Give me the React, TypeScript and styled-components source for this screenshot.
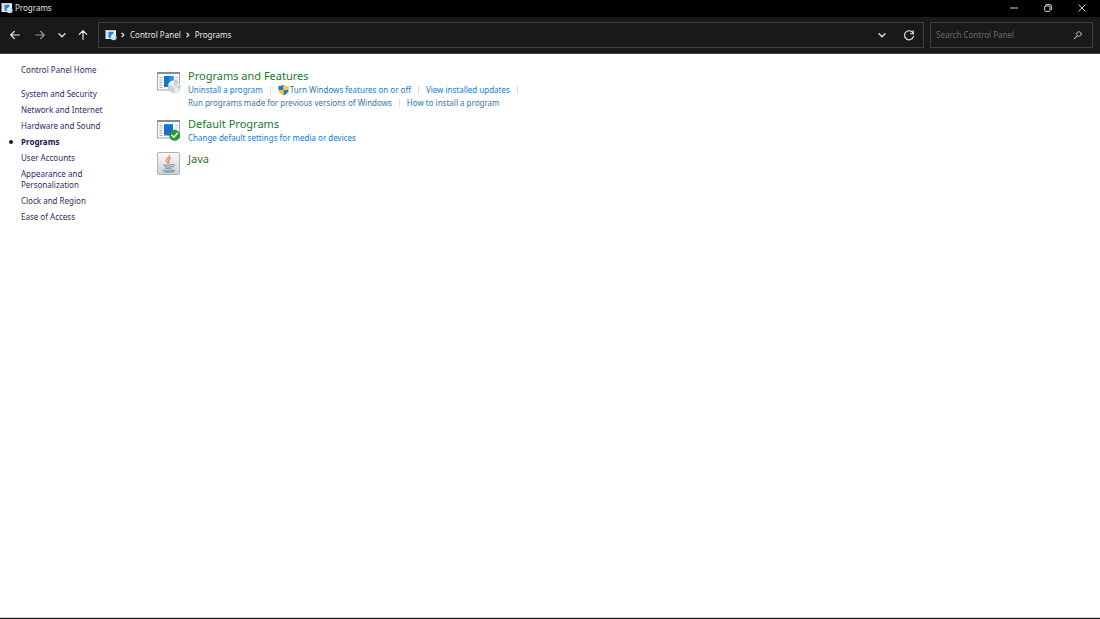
import React from "react";
import styled, { createGlobalStyle } from "styled-components";

const GlobalStyle = createGlobalStyle`
  *, *::before, *::after { box-sizing: border-box; }
  body {
    margin: 0;
    background: #fff;
    font-family: "Noto Sans", "Open Sans", sans-serif;
    font-size: 8px;
  }
  svg { display: block; flex: none; }
  a { text-decoration: none; color: inherit; }
  a:hover { text-decoration: underline; }
  button {
    border: 0;
    padding: 0;
    background: transparent;
    color: inherit;
    font: inherit;
  }
`;

const Window = styled.div`
  min-height: 100vh;
  display: flex;
  flex-direction: column;
  background: #fff;
  border-bottom: 1px solid #1c1c1c;
  box-shadow: inset 0 -1px 0 #cfcfcf;
`;

const TitleBar = styled.header`
  display: flex;
  align-items: center;
  height: 17px;
  padding: 0 0 1px 1px;
  background: #000;
  color: #e4e4e4;
`;

const WindowTitle = styled.h1`
  flex: 1;
  margin: 0;
  padding-left: 2px;
  font-size: 8px;
  font-weight: 400;
  line-height: 12px;
`;

const CaptionButton = styled.button`
  display: flex;
  align-items: center;
  justify-content: center;
  width: 34px;
  height: 16px;
  color: #d0d0d0;
`;

const CaptionButtons = styled.div`
  display: flex;
  padding-right: 1px;
`;

const Toolbar = styled.div`
  display: flex;
  align-items: center;
  height: 37px;
  padding: 0 7px 0 2px;
  background: #191919;
  border-bottom: 1px solid #3a3a3a;
  color: #e8e8e8;
`;

const ToolButton = styled.button<{ $width: number; $dim?: boolean }>`
  display: flex;
  align-items: center;
  justify-content: center;
  width: ${(p) => p.$width}px;
  height: 26px;
  color: ${(p) => (p.$dim ? "#9a9a9a" : "#e8e8e8")};
`;

const AddressBar = styled.div`
  display: flex;
  align-items: center;
  flex: 1;
  height: 26px;
  margin: 0 6px 0 3px;
  padding: 0 1px 0 6px;
  border: 1px solid #404040;
`;

const Crumbs = styled.nav`
  display: flex;
  align-items: center;
  flex: 1;
  gap: 5px;
  padding-left: 4px;
  line-height: 12px;
`;

const SearchBox = styled.label`
  display: flex;
  align-items: center;
  width: 163px;
  height: 26px;
  padding: 0 9px 0 5px;
  border: 1px solid #404040;
  color: #b0b0b0;
`;

const SearchInput = styled.input`
  flex: 1;
  min-width: 0;
  padding: 0;
  border: 0;
  outline: 0;
  background: transparent;
  color: #e8e8e8;
  font: inherit;
  line-height: 12px;
  &::placeholder { color: #6a6a6a; opacity: 1; }
`;

const Body = styled.div`
  display: flex;
  flex: 1;
  align-items: flex-start;
`;

const Sidebar = styled.nav`
  width: 157px;
  padding: 10px 50px 0 21px;
  color: #2c2c66;
  line-height: 11px;
`;

const HomeLink = styled.a`
  display: block;
`;

const NavList = styled.ul`
  display: flex;
  flex-direction: column;
  gap: 5px;
  margin: 13px 0 0;
  padding: 0;
  list-style: none;
`;

const NavItem = styled.li<{ $current?: boolean }>`
  position: relative;
  font-weight: ${(p) => (p.$current ? 700 : 400)};
  color: ${(p) => (p.$current ? "#15154f" : "inherit")};
  &::before {
    content: "";
    display: ${(p) => (p.$current ? "block" : "none")};
    position: absolute;
    left: -12px;
    top: 4px;
    width: 4px;
    height: 4px;
    border-radius: 50%;
    background: #15154f;
  }
`;

const Categories = styled.main`
  display: flex;
  flex: 1;
  flex-direction: column;
  gap: 8px;
  padding-top: 15px;
`;

const Category = styled.section`
  display: flex;
  gap: 7px;
`;

const CategoryIcon = styled.div`
  height: 24px;
`;

const CategoryTitle = styled.h2`
  margin: 0;
  color: #1a7a1f;
  font-size: 11px;
  font-weight: 400;
  line-height: 14px;
`;

const TaskRow = styled.div`
  display: flex;
  align-items: center;
  color: #2878be;
  line-height: 13px;
`;

const Task = styled.a`
  display: flex;
  align-items: center;
`;

const Divider = styled.span`
  width: 1px;
  height: 8px;
  margin: 0 7px;
  background: #dcdcdc;
`;

const stroke = {
  fill: "none",
  stroke: "currentColor",
  strokeWidth: 1.2,
  strokeLinecap: "round" as const,
  strokeLinejoin: "round" as const,
};

const AppIcon = () => (
  <svg width="12" height="12" viewBox="0 0 12 12" aria-hidden="true">
    <rect x="0.5" y="1" width="10.5" height="9" fill="#edf5fa" />
    <path d="M0.5 1h10.5v1H0.5z" fill="#a9c8dd" />
    <path d="M1.2 3.2h1.6M1.2 5h1.6M1.2 6.8h1.6" stroke="#8aaabd" strokeWidth="0.6" />
    <path d="M3.5 2.8h5v4l-2 2.2h-3z" fill="#2383cf" />
    <circle cx="8.6" cy="8.2" r="3" fill="#c9dce8" />
    <path d="M8.6 8.2 6.2 6.4a3 3 0 0 1 3.2-1.1z" fill="#eff8fd" />
    <circle cx="8.6" cy="8.2" r="0.8" fill="#eef4f7" />
  </svg>
);

const WindowPanel = () => (
  <>
    <rect x="0.5" y="3.5" width="22" height="17.5" fill="#fbfbfb" stroke="#a2a8ad" />
    <path d="M0 3h23v2H0z" fill="#858c92" />
    <path d="M2.5 8.5h3M2.5 11h3M2.5 13.5h3M2.5 16h3M2.5 18.5h3" stroke="#8a979f" strokeWidth="0.8" />
    <path d="M18 8.5h3M18 11h3" stroke="#b5bdc4" strokeWidth="0.8" />
  </>
);

const ProgramsIcon = () => (
  <svg width="24" height="26" viewBox="0 0 24 26" aria-hidden="true">
    <WindowPanel />
    <path d="M7 7h9.5v11H7z" fill="#1973c4" />
    <path d="M12 7h4.5v5H12z" fill="#2c91dc" />
    <circle cx="17.2" cy="17.6" r="6.2" fill="#cbd3d9" stroke="#aeb9c0" strokeWidth="0.6" />
    <path d="M17.2 17.6 11.4 15.6a6.2 6.2 0 0 1 5.2-4.1z" fill="#f6f9fa" />
    <path d="M17.2 17.6 23 19.8a6.2 6.2 0 0 1-5.3 3.9z" fill="#e9f0f2" />
    <path d="M17.2 17.6 21.2 12.9a6.2 6.2 0 0 1 2.1 4z" fill="#dfe5e3" />
    <circle cx="17.2" cy="17.6" r="1.5" fill="#f5f7f8" stroke="#b8c2c8" strokeWidth="0.5" />
  </svg>
);

const DefaultsIcon = () => (
  <svg width="24" height="26" viewBox="0 0 24 26" aria-hidden="true">
    <WindowPanel />
    <path d="M7 7h9v11.5H7z" fill="#1871c4" />
    <path d="M7 7h9v1H7z" fill="#3495dc" />
    <circle cx="17.6" cy="18.2" r="5.2" fill="#2b9c2f" stroke="#17821d" strokeWidth="0.6" />
    <path d="m14.8 18.3 2 2 3.7-4" {...stroke} stroke="#fff" strokeWidth={1.5} />
  </svg>
);

const JavaIcon = () => (
  <svg width="24" height="24" viewBox="0 0 24 24" aria-hidden="true">
    <defs>
      <linearGradient id="tile" x1="0" y1="0" x2="0" y2="1">
        <stop offset="0" stopColor="#fafafa" />
        <stop offset="1" stopColor="#cdd2d6" />
      </linearGradient>
    </defs>
    <rect x="0.5" y="0.5" width="22" height="22" rx="1.5" fill="url(#tile)" stroke="#adb2b6" />
    <path d="M12.3 3.2c1.3 2.3-3.8 3.4-3.1 5.5.3 1 1.4 1.6 1.7 2.5M14.1 6c-2.2.9-3.2 1.8-2.3 3 .8 1 .3 1.5-.4 2.2" fill="none" stroke="#e2793b" strokeWidth="1.1" strokeLinecap="round" />
    <path d="M6.7 12.6c-1.7.9 7.8 1 9-.2M7.5 14.5c.8 1 5.6 1 7.2.1M8.2 16.4c1 .8 4.4.8 5.8.1M15.8 12.5c2.8-.6 2.4 1.8-.6 2.6M6.4 17.8c-3.5 1.2 7.2 2.1 10.5.2M7.7 20c3.5.5 8.7.3 10.1-1" fill="none" stroke="#4d7899" strokeWidth="0.8" strokeLinecap="round" />
  </svg>
);

const ShieldIcon = () => (
  <svg width="12" height="12" viewBox="0 0 12 12" aria-hidden="true">
    <path d="M5.6.5C4.1 1.5 2.3 2 .4 2V6h5.2z" fill="#2678c8" />
    <path d="M5.6.5C7.1 1.5 8.9 2 10.8 2V6H5.6z" fill="#f8cf28" />
    <path d="M.4 6h5.2v5.5C2.8 10.4.8 8.7.4 6z" fill="#f8c81f" />
    <path d="M10.8 6H5.6v5.5c2.8-1.1 4.8-2.8 5.2-5.5z" fill="#2878c5" />
  </svg>
);

const Arrow = ({ turn = 0 }: { turn?: number }) => (
  <svg width="12" height="12" viewBox="0 0 12 12" aria-hidden="true">
    <path d="M10.3 6H1.7M5.4 2.3 1.7 6l3.7 3.7" transform={`rotate(${turn} 6 6)`} {...stroke} />
  </svg>
);

const ChevronDown = () => (
  <svg width="8" height="8" viewBox="0 0 8 8" aria-hidden="true">
    <path d="m1 2.7 3 3 3-3" {...stroke} strokeWidth={1.3} />
  </svg>
);

const CrumbChevron = () => (
  <svg width="4" height="8" viewBox="0 0 4 8" aria-hidden="true">
    <path d="M1 2.2 2.9 4 1 5.8" {...stroke} />
  </svg>
);

const RefreshIcon = () => (
  <svg width="12" height="12" viewBox="0 0 12 12" aria-hidden="true">
    <path d="M10.4 5.2A4.5 4.5 0 1 0 10.4 7.4M10.2 1.8v3H7.4" {...stroke} strokeWidth={1.1} />
  </svg>
);

const SearchIcon = () => (
  <svg width="10" height="10" viewBox="0 0 10 10" aria-hidden="true">
    <circle cx="6" cy="4" r="2.3" {...stroke} strokeWidth={1} />
    <path d="M4.2 5.8 1.4 8.6" {...stroke} strokeWidth={1.1} />
  </svg>
);

const navigation = [
  "System and Security",
  "Network and Internet",
  "Hardware and Sound",
  "Programs",
  "User Accounts",
  "Appearance and Personalization",
  "Clock and Region",
  "Ease of Access",
];

type TaskInfo = { label: string; shield?: boolean };

const categories: {
  title: string;
  icon: React.ReactNode;
  rows: { tasks: TaskInfo[]; continues?: boolean }[];
}[] = [
  {
    title: "Programs and Features",
    icon: <ProgramsIcon />,
    rows: [
      {
        tasks: [
          { label: "Uninstall a program" },
          { label: "Turn Windows features on or off", shield: true },
          { label: "View installed updates" },
        ],
        continues: true,
      },
      {
        tasks: [
          { label: "Run programs made for previous versions of Windows" },
          { label: "How to install a program" },
        ],
      },
    ],
  },
  {
    title: "Default Programs",
    icon: <DefaultsIcon />,
    rows: [{ tasks: [{ label: "Change default settings for media or devices" }] }],
  },
  { title: "Java", icon: <JavaIcon />, rows: [] },
];

export default function App() {
  return (
    <Window>
      <GlobalStyle />
      <TitleBar>
        <AppIcon />
        <WindowTitle>Programs</WindowTitle>
        <CaptionButtons>
          <CaptionButton aria-label="Minimize">
            <svg width="8" height="8" viewBox="0 0 8 8"><path d="M0.5 4h7" {...stroke} strokeWidth={1} /></svg>
          </CaptionButton>
          <CaptionButton aria-label="Restore">
            <svg width="8" height="8" viewBox="0 0 8 8">
              <rect x="0.6" y="2" width="5.4" height="5.4" rx="1" {...stroke} strokeWidth={1} />
              <path d="M2.2.6h3.6a1.6 1.6 0 0 1 1.6 1.6v3.4" {...stroke} strokeWidth={1} />
            </svg>
          </CaptionButton>
          <CaptionButton aria-label="Close">
            <svg width="8" height="8" viewBox="0 0 8 8"><path d="m.8.8 6.4 6.4M7.2.8.8 7.2" {...stroke} strokeWidth={1} /></svg>
          </CaptionButton>
        </CaptionButtons>
      </TitleBar>
      <Toolbar>
        <ToolButton $width={25} aria-label="Back"><Arrow /></ToolButton>
        <ToolButton $width={25} $dim aria-label="Forward"><Arrow turn={180} /></ToolButton>
        <ToolButton $width={19} aria-label="Recent locations"><ChevronDown /></ToolButton>
        <ToolButton $width={24} aria-label="Up"><Arrow turn={90} /></ToolButton>
        <AddressBar>
          <AppIcon />
          <Crumbs aria-label="Address">
            <CrumbChevron />
            <a href="#control-panel">Control Panel</a>
            <CrumbChevron />
            <a href="#programs">Programs</a>
          </Crumbs>
          <ToolButton $width={27} aria-label="Previous locations"><ChevronDown /></ToolButton>
          <ToolButton $width={27} aria-label="Refresh"><RefreshIcon /></ToolButton>
        </AddressBar>
        <SearchBox>
          <SearchInput type="text" placeholder="Search Control Panel" aria-label="Search Control Panel" />
          <SearchIcon />
        </SearchBox>
      </Toolbar>
      <Body>
        <Sidebar aria-label="Categories">
          <HomeLink href="#home">Control Panel Home</HomeLink>
          <NavList>
            {navigation.map((name) => (
              <NavItem key={name} $current={name === "Programs"}>
                <a href="#category">{name}</a>
              </NavItem>
            ))}
          </NavList>
        </Sidebar>
        <Categories>
          {categories.map(({ title, icon, rows }) => (
            <Category key={title}>
              <CategoryIcon>{icon}</CategoryIcon>
              <div>
                <CategoryTitle><a href="#category">{title}</a></CategoryTitle>
                {rows.map(({ tasks, continues }) => (
                  <TaskRow key={tasks[0].label}>
                    {tasks.map(({ label, shield }, i) => (
                      <React.Fragment key={label}>
                        {i > 0 && <Divider />}
                        <Task href="#task">
                          {shield && <ShieldIcon />}
                          {label}
                        </Task>
                      </React.Fragment>
                    ))}
                    {continues && <Divider />}
                  </TaskRow>
                ))}
              </div>
            </Category>
          ))}
        </Categories>
      </Body>
    </Window>
  );
}
